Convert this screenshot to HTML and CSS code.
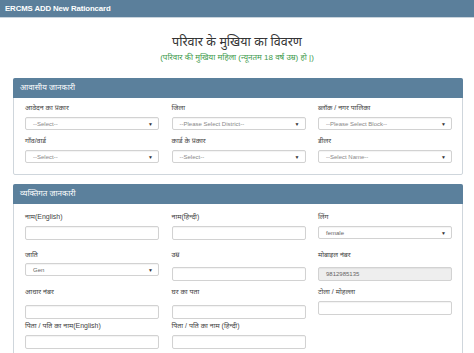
FILE: index.html
```html
<!DOCTYPE html>
<html lang="hi">
<head>
<meta charset="utf-8">
<title>ERCMS ADD New Rationcard</title>
<link rel="stylesheet" href="styles.css">
</head>
<body>
<header class="topbar">ERCMS ADD New Rationcard</header>

<div class="heading">
  <h1 class="title">परिवार के मुखिया का विवरण</h1>
  <p class="subtitle">(परिवार की मुखिया महिला (न्यूनतम 18 वर्ष उम्र) हो |)</p>
</div>

<main class="wrap">
  <section class="panel">
    <div class="panel-head">आवासीय जानकारी</div>
    <div class="panel-body">
      <div class="grid">
        <div class="field">
          <label class="lbl">आवेदन का प्रकार</label>
          <div class="select"><span>--Select--</span><span class="arrow">▼</span></div>
        </div>
        <div class="field">
          <label class="lbl">जिला</label>
          <div class="select"><span>--Please Select District--</span><span class="arrow">▼</span></div>
        </div>
        <div class="field">
          <label class="lbl">ब्लॉक / नगर पालिका</label>
          <div class="select"><span>--Please Select Block--</span><span class="arrow">▼</span></div>
        </div>
        <div class="field row-b">
          <label class="lbl">गाँव/वार्ड</label>
          <div class="select"><span>--Select--</span><span class="arrow">▼</span></div>
        </div>
        <div class="field row-b">
          <label class="lbl">कार्ड के प्रकार</label>
          <div class="select"><span>--Select--</span><span class="arrow">▼</span></div>
        </div>
        <div class="field row-b">
          <label class="lbl">डीलर</label>
          <div class="select"><span>--Select Name--</span><span class="arrow">▼</span></div>
        </div>
      </div>
    </div>
  </section>

  <section class="panel panel-2">
    <div class="panel-head">व्यक्तिगत जानकारी</div>
    <div class="panel-body body-2">
      <div class="grid">
        <div class="field">
          <label class="lbl">नाम(English)</label>
          <div class="input"></div>
        </div>
        <div class="field">
          <label class="lbl">नाम(हिन्दी)</label>
          <div class="input"></div>
        </div>
        <div class="field">
          <label class="lbl">लिंग</label>
          <div class="select"><span class="val">female</span><span class="arrow">▼</span></div>
        </div>

        <div class="field r2">
          <label class="lbl">जाति</label>
          <div class="select sel-up"><span class="val">Gen</span><span class="arrow">▼</span></div>
        </div>
        <div class="field r2">
          <label class="lbl">उम्र</label>
          <div class="input in-down"></div>
        </div>
        <div class="field r2">
          <label class="lbl">मोबाइल नंबर</label>
          <div class="input in-down readonly"><span class="val">9812985135</span></div>
        </div>

        <div class="field r3">
          <label class="lbl">आधार नंबर</label>
          <div class="input in-low"></div>
        </div>
        <div class="field r3">
          <label class="lbl">घर का पता</label>
          <div class="input in-low"></div>
        </div>
        <div class="field r3">
          <label class="lbl">टोला / मोहल्ला</label>
          <div class="input"></div>
        </div>

        <div class="field r4">
          <label class="lbl">पिता / पति का नाम(English)</label>
          <div class="input"></div>
        </div>
        <div class="field r4">
          <label class="lbl">पिता / पति का नाम (हिन्दी)</label>
          <div class="input"></div>
        </div>
      </div>
    </div>
  </section>
</main>
</body>
</html>
```

FILE: styles.css
```css
html, body {
  margin: 0;
  padding: 0;
  background: #ffffff;
  overflow: hidden;
}

body {
  font-family: "Liberation Sans", "Noto Sans Devanagari", "Noto Sans", sans-serif;
  color: #333333;
}

.topbar {
  height: 17px;
  line-height: 17px;
  background: #5b7f9b;
  border-bottom: 1px solid #c9d4dd;
  color: #ffffff;
  font-weight: bold;
  font-size: 7.8px;
  padding-left: 5px;
  letter-spacing: -0.1px;
}

.heading {
  text-align: center;
  padding-top: 14px;
}

.title {
  margin: 0;
  font-size: 12.5px;
  line-height: 20px;
  font-weight: normal;
  color: #333333;
}

.subtitle {
  margin: 0;
  font-size: 8px;
  line-height: 12px;
  color: #3d9a4c;
}

.wrap {
  margin: 14px 11px 0 13px;
}

.panel {
  border: 1px solid #cfd6dc;
  border-radius: 2px;
  background: #ffffff;
}

.panel-2 {
  margin-top: 9px;
}

.panel-head {
  background: #5b809c;
  color: #ffffff;
  font-size: 8px;
  height: 20px;
  line-height: 20px;
  padding-left: 7px;
  margin: -1px -1px 0 -1px;
  border-radius: 2px 2px 0 0;
}

.panel-body {
  padding: 5px 11px 11px 11px;
}

.body-2 {
  padding-top: 8px;
  height: 140px;
}

.grid {
  display: grid;
  grid-template-columns: 134px 134px 134px;
  column-gap: 12.5px;
}

.field {
  display: flex;
  flex-direction: column;
}

.row-b {
  margin-top: 6px;
}

.lbl {
  font-size: 7px;
  line-height: 10px;
  height: 10px;
  color: #444444;
  margin-bottom: 4px;
  white-space: nowrap;
}

.select,
.input {
  box-sizing: border-box;
  height: 13px;
  border: 1px solid #d2d2d2;
  border-radius: 2px;
  box-shadow: inset 0 1px 1px rgba(0, 0, 0, 0.05);
  background: #ffffff;
  display: flex;
  align-items: center;
  justify-content: space-between;
  padding: 0 5px 0 7px;
  font-size: 6px;
  color: #888888;
}

.input {
  height: 14px;
}

.val {
  color: #666666;
}

.arrow {
  font-size: 5px;
  color: #333333;
}

.readonly {
  background: #eeeeee;
}

.r2 {
  margin-top: 10px;
}

.sel-up {
  margin-top: -1px;
}

.in-down {
  margin-top: 3px;
}

.r3 {
  margin-top: 6px;
}

.in-low {
  margin-top: 4px;
}

.r4 {
  margin-top: 2px;
}
```
